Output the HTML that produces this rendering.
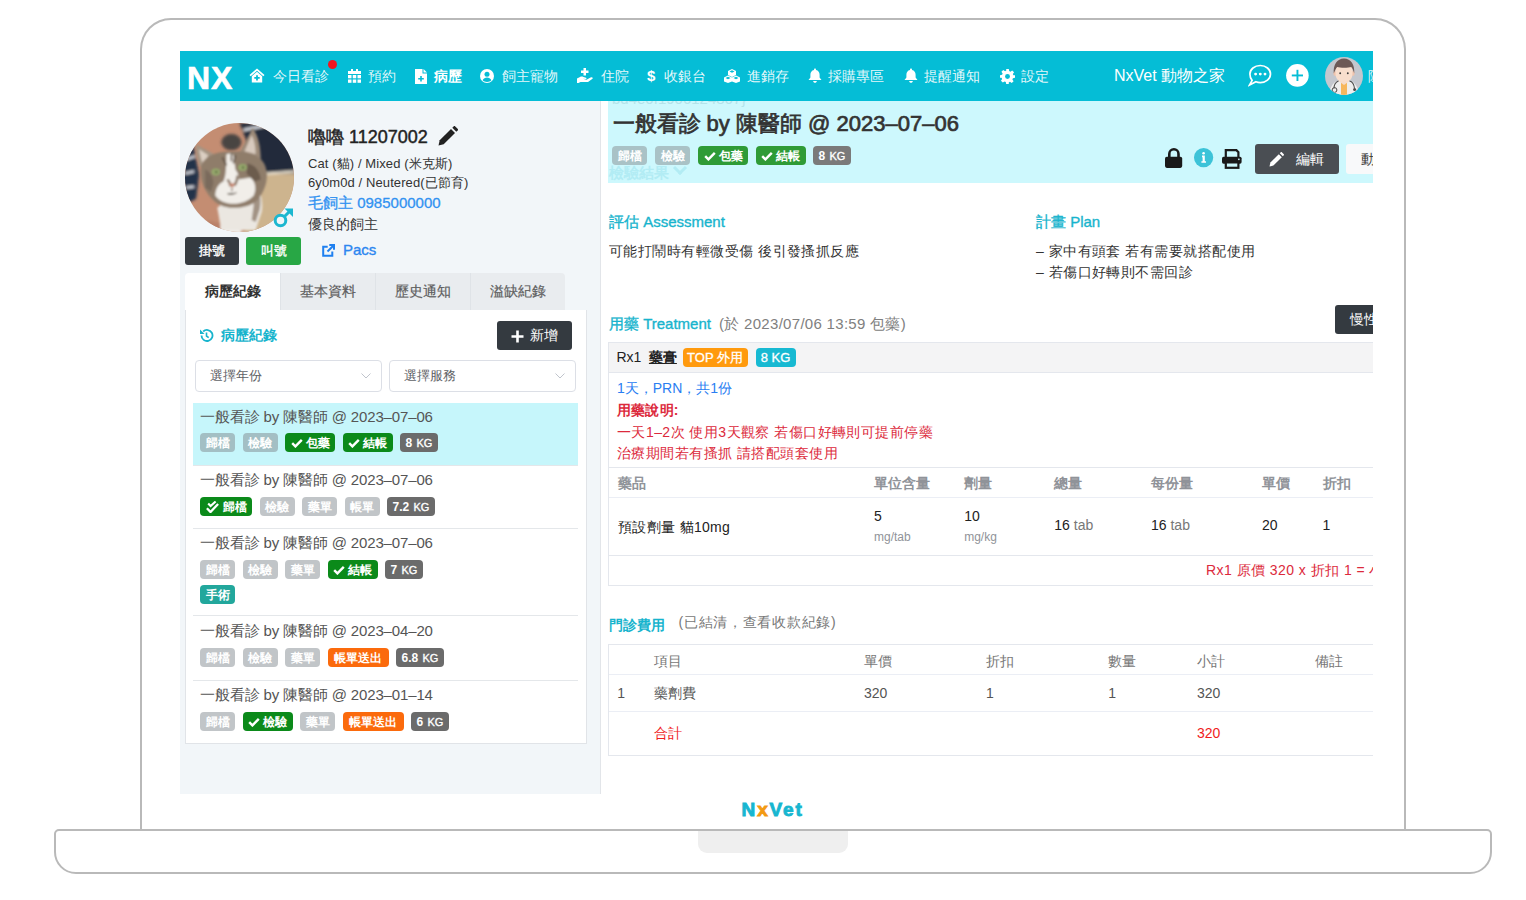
<!DOCTYPE html>
<html><head><meta charset="utf-8">
<style>
*{box-sizing:border-box;margin:0;padding:0}
html,body{width:1526px;height:900px;overflow:hidden;background:#fff;font-family:"Liberation Sans",sans-serif;color:#212529}
.abs{position:absolute}
#lid{position:absolute;left:140px;top:18px;width:1266px;height:812px;border:2px solid #b9b9b9;border-bottom:none;border-radius:31px 31px 0 0}
#base{position:absolute;left:54px;top:829px;width:1438px;height:45px;border:2px solid #b9b9b9;border-radius:5px 5px 22px 22px;background:#fff}
#notch{position:absolute;left:698px;top:831px;width:150px;height:22px;background:#efefef;border-radius:0 0 9px 9px}
#screen{position:absolute;left:180px;top:51px;width:1193px;height:743px;overflow:hidden;background:#fff}
#nav{position:absolute;left:0;top:0;width:1193px;height:50px;background:#05bdd6;color:rgba(255,255,255,.9);font-size:14px}
#nav .t{position:absolute;top:0;line-height:50px;white-space:nowrap}
#nav svg{position:absolute}
#side{position:absolute;left:0;top:50px;width:421px;height:693px;background:#f2f6f9;border-right:1px solid #e2e5e9}
#main{position:absolute;left:421px;top:50px;width:772px;height:693px;background:#fff}
.badge{display:inline-block;text-align:center;height:19px;line-height:20px;padding:0 5.5px;border-radius:4px;font-size:12px;font-weight:bold;color:#fff;white-space:nowrap;vertical-align:top}
.bg{background:rgba(108,117,125,.42)}
.bgr{background:#0b8a1a}
.bkg{background:#6b6b6b}
.bor{background:#fb6a0c}
.bte{background:#22a79c}
.kg{font-size:11px;font-weight:normal;-webkit-text-stroke:0.35px #fff;margin-left:1px}
.chk{display:inline-block;width:12px;height:10px;margin-right:3px;vertical-align:-1px}
.item{position:absolute;left:8px;width:385px;border-top:1px solid #e4e7ea}
.item .ttl{position:absolute;left:7px;font-size:15px;color:#555;white-space:nowrap;line-height:20px;letter-spacing:-0.14px}
.item .row{position:absolute;left:7px;white-space:nowrap}
.item .row .badge{margin-right:7.5px}
.cy{color:#17b4cd}
.hd{position:absolute;font-size:15px;color:#17b4cd;white-space:nowrap;line-height:20px;-webkit-text-stroke:0.35px #17b4cd}
.tx{position:absolute;font-size:14px;color:#333;white-space:nowrap;line-height:20px;letter-spacing:0.47px}
.th{position:absolute;font-size:14px;color:#909399;font-weight:bold;white-space:nowrap;line-height:20px}
.td{position:absolute;font-size:14px;color:#222;white-space:nowrap;line-height:20px}
</style></head><body>
<div id="lid"></div>
<div id="screen">
  <div id="nav">
    <div class="t" style="left:7px;top:1.5px;font-size:32px;font-weight:bold;color:#fff;-webkit-text-stroke:0.6px #fff;letter-spacing:1px">NX</div>
    <!-- home -->
    <svg style="left:69px;top:17px" width="16" height="15" viewBox="0 0 16 15"><path d="M8 0.5L0.5 7l1.2 1.3L8 2.8l6.3 5.5 1.2-1.3z" fill="#fff"/><path d="M2.8 8.2L8 3.7l5.2 4.5V14.5H2.8z" fill="#fff"/><path d="M7.1 7.2h1.8v1.8h1.8v1.8H8.9v1.8H7.1v-1.8H5.3V9h1.8z" fill="#05bdd6"/></svg>
    <div class="t" style="left:93px">今日看診</div>
    <div class="abs" style="left:148px;top:9px;width:9px;height:9px;border-radius:50%;background:#f2141e"></div>
    <!-- calendar -->
    <svg style="left:168px;top:18px" width="13" height="14" viewBox="0 0 13 14"><rect x="0" y="2" width="13" height="3" fill="#fff"/><rect x="3" y="0" width="2" height="3" fill="#fff"/><rect x="8" y="0" width="2" height="3" fill="#fff"/><rect x="0" y="6" width="3.5" height="3.3" fill="#fff"/><rect x="4.75" y="6" width="3.5" height="3.3" fill="#fff"/><rect x="9.5" y="6" width="3.5" height="3.3" fill="#fff"/><rect x="0" y="10.5" width="3.5" height="3.3" fill="#fff"/><rect x="4.75" y="10.5" width="3.5" height="3.3" fill="#fff"/><rect x="9.5" y="10.5" width="3.5" height="3.3" fill="#fff"/></svg>
    <div class="t" style="left:188px">預約</div>
    <!-- file -->
    <svg style="left:235px;top:18px" width="12" height="15" viewBox="0 0 12 15"><path d="M0 0h7.5v4.5H12V15H0z" fill="#fff"/><path d="M8.5 0L12 3.5H8.5z" fill="#fff"/><path d="M5.2 7h1.6v2h2v1.6h-2v2H5.2v-2h-2V9h2z" fill="#05bdd6"/></svg>
    <div class="t" style="left:254px;font-weight:bold;color:#fff">病歷</div>
    <!-- user circle -->
    <svg style="left:300px;top:18px" width="14" height="14" viewBox="0 0 14 14"><circle cx="7" cy="7" r="7" fill="#fff"/><circle cx="7" cy="5.3" r="2.5" fill="#05bdd6"/><path d="M2.6 11.3C3.6 9.4 5.2 8.6 7 8.6s3.4.8 4.4 2.7C10.3 12.4 8.8 13 7 13s-3.3-.6-4.4-1.7z" fill="#05bdd6"/></svg>
    <div class="t" style="left:322px">飼主寵物</div>
    <!-- hand medical -->
    <svg style="left:397px;top:17px" width="17" height="15" viewBox="0 0 17 15"><path d="M6.5 0h2.5v2.5h2.5V5H9v2.5H6.5V5H4V2.5h2.5z" fill="#fff"/><path d="M0 10.5l3-1.5c1.2-.6 2.3-.6 3.5 0l2.5.8c.8.3.6 1.4-.3 1.3L6 10.8l3.5 1 4.5-2.5c1.2-.6 2.4.6 1.5 1.5L11 14H3.5L1.5 15H0z" fill="#fff"/></svg>
    <div class="t" style="left:421px">住院</div>
    <div class="t" style="left:467px;font-weight:bold;color:#fff;font-size:15px">$</div>
    <div class="t" style="left:484px">收銀台</div>
    <!-- cubes -->
    <svg style="left:544px;top:18px" width="16" height="14" viewBox="0 0 16 14"><path d="M8 0l4 2v4l-4 2-4-2V2z" fill="#fff"/><path d="M4 6.5l4 2v4l-4 1.5-4-1.5v-4z" fill="#fff"/><path d="M12 6.5l4 2v4l-4 1.5-4-1.5v-4z" fill="#fff"/><path d="M8 1.3l2.5 1.2L8 3.7 5.5 2.5zM4 7.8l2.5 1.2L4 10.2 1.5 9zM12 7.8l2.5 1.2-2.5 1.2L9.5 9z" fill="#05bdd6"/></svg>
    <div class="t" style="left:567px">進銷存</div>
    <!-- bell -->
    <svg style="left:628px;top:17px" width="14" height="15" viewBox="0 0 14 15"><path d="M7 0.5c.7 0 1 .5 1 1v.6c2.3.5 3.6 2.4 3.6 4.7v2.6L13.5 12H.5l1.9-2.6V6.8c0-2.3 1.3-4.2 3.6-4.7v-.6c0-.5.3-1 1-1z" fill="#fff"/><path d="M5.2 13h3.6c0 1-.8 1.8-1.8 1.8S5.2 14 5.2 13z" fill="#fff"/></svg>
    <div class="t" style="left:648px">採購專區</div>
    <svg style="left:724px;top:17px" width="14" height="15" viewBox="0 0 14 15"><path d="M7 0.5c.7 0 1 .5 1 1v.6c2.3.5 3.6 2.4 3.6 4.7v2.6L13.5 12H.5l1.9-2.6V6.8c0-2.3 1.3-4.2 3.6-4.7v-.6c0-.5.3-1 1-1z" fill="#fff"/><path d="M5.2 13h3.6c0 1-.8 1.8-1.8 1.8S5.2 14 5.2 13z" fill="#fff"/></svg>
    <div class="t" style="left:744px">提醒通知</div>
    <!-- cog -->
    <svg style="left:820px;top:18px" width="15" height="15" viewBox="0 0 16 16"><path d="M6.6 0h2.8l.4 2.2 1.3.6 1.9-1.3 2 2-1.3 1.9.6 1.3L16 6.6v2.8l-2.2.4-.6 1.3 1.3 1.9-2 2-1.9-1.3-1.3.6L9.4 16H6.6l-.4-2.2-1.3-.6L3 14.5l-2-2 1.3-1.9-.6-1.3L0 9.4V6.6l2.2-.4.6-1.3L1.5 3l2-2 1.9 1.3 1.3-.6z" fill="#fff"/><circle cx="8" cy="8" r="2.6" fill="#05bdd6"/></svg>
    <div class="t" style="left:841px">設定</div>
    <div class="t" style="left:934px;font-size:16px;color:#fff">NxVet 動物之家</div>
    <!-- chat -->
    <svg style="left:1067.5px;top:13px" width="24" height="23" viewBox="0 0 24 23"><path d="M12.3 1.5c5.6 0 10.2 3.8 10.2 8.6s-4.6 8.6-10.2 8.6c-1.6 0-3.1-.3-4.4-.9L1.5 21l2.6-4.6C2.7 14.8 1.9 12.6 1.9 10.1 1.9 5.3 6.6 1.5 12.3 1.5z" fill="none" stroke="#fff" stroke-width="1.7"/><circle cx="7.6" cy="10.1" r="1.45" fill="#fff"/><circle cx="12.3" cy="10.1" r="1.45" fill="#fff"/><circle cx="17" cy="10.1" r="1.45" fill="#fff"/></svg>
    <!-- plus circle -->
    <svg style="left:1106.2px;top:12.6px" width="23" height="23" viewBox="0 0 23 23"><circle cx="11.4" cy="11.4" r="11.3" fill="#fff"/><rect x="10.5" y="5.8" width="1.9" height="11.2" fill="#05bdd6"/><rect x="5.8" y="10.5" width="11.2" height="1.9" fill="#05bdd6"/></svg>
    <!-- avatar -->
    <svg style="left:1145px;top:6.3px" width="38" height="38" viewBox="0 0 38 38"><defs><clipPath id="av"><circle cx="19" cy="19" r="19"/></clipPath></defs><circle cx="19" cy="19" r="19" fill="#c4c7ce"/><g clip-path="url(#av)"><path d="M4 38c.5-6 3-11 7-13.5l8-1.5 8 1.5c4 2.5 6.5 7.5 7 13.5z" fill="#eeeeee"/><path d="M16 25h6v13h-6z" fill="#f6b75e"/><path d="M13.5 24l5.5 4 5.5-4-1.5-3h-8z" fill="#f6dccb"/><ellipse cx="10" cy="16.5" rx="1.6" ry="2.4" fill="#eec3ad"/><ellipse cx="28" cy="16.5" rx="1.6" ry="2.4" fill="#eec3ad"/><path d="M10.5 13c0-5 3.5-8 8.5-8s8.5 3 8.5 8v4c0 5-3.5 8-8.5 8s-8.5-3-8.5-8z" fill="#f8decd"/><path d="M8.8 16.5C8 8 12 1.5 19 1.5S30 8 29.2 16.5c-.8-3-1.5-5-3-6.5-3 1-11 1-14 0-1.5 1.5-2.2 3.5-3.4 6.5z" fill="#6d5956"/><circle cx="15.2" cy="16.3" r=".95" fill="#3b3b3b"/><circle cx="22.8" cy="16.3" r=".95" fill="#3b3b3b"/><path d="M13.5 24c-2.5 1-4.5 4-4.5 7.5M24.5 24c2.5 .5 4.5 3 5 7.5" stroke="#4a4a4a" stroke-width="1.1" fill="none"/><circle cx="29.6" cy="32.5" r="1.5" fill="#4a4a4a"/><circle cx="9.5" cy="33" r="2.4" fill="none" stroke="#4a4a4a" stroke-width="1"/></g></svg>
    <div class="t" style="left:1188px">陳</div>
  </div>

  <div id="side">
    <!-- cat photo -->
    <svg class="abs" style="left:4.5px;top:22.3px" width="109" height="109" viewBox="0 0 108 108"><defs><clipPath id="cat"><circle cx="54" cy="54" r="54"/></clipPath><filter id="bl" x="-10%" y="-10%" width="120%" height="120%"><feGaussianBlur stdDeviation="1.4"/></filter><filter id="bl2" x="-10%" y="-10%" width="120%" height="120%"><feGaussianBlur stdDeviation="0.9"/></filter></defs>
    <g clip-path="url(#cat)">
      <rect width="108" height="108" fill="#c48d72"/>
      <g filter="url(#bl)">
      <path d="M-4 26l12-5 6 30-3 24-15 8z" fill="#22304a"/>
      <path d="M1 36l9-3M0 50l9-2M1 64l8-1" stroke="#e6e8ee" stroke-width="2.2"/>
      <path d="M54 0h56v52H70L62 20z" fill="#212a3a"/>
      <path d="M58 7l20-4" stroke="#e6e8ee" stroke-width="2.5"/>
      <path d="M70 50h40v60H58l8-30z" fill="#cdb48e"/>
      <path d="M70 51l40-3" stroke="#ece4d4" stroke-width="2.2"/>
      <ellipse cx="46" cy="19" rx="10" ry="8" fill="#484442"/>
      <path d="M10 100c8-4 20-4 28 2v8H10z" fill="#b98068"/>
      <path d="M36 101h20v9H36z" fill="#f0eee9"/>
      </g>
      <g filter="url(#bl2)">
      <path d="M66 58c8 6 12 18 10 30l-6 18H36l-4-22z" fill="#ebe7e1"/>
      <path d="M68 56c6 8 8 20 6 30l-4 12-4-2 2-14c0-10-2-18-6-24z" fill="#a29384"/>
      <path d="M11 21l18 10-8 18-6-6c-3-6-4-14-4-22z" fill="#a59483"/>
      <path d="M14 26l9 6-5 9c-2-4-3-9-4-15z" fill="#dccfc3"/>
      <path d="M67 5l-14 26 22 6c0-12-2-24-8-32z" fill="#9c8a78"/>
      <path d="M66 12l-7 16 11 3c0-7-1-13-4-19z" fill="#d8cabe"/>
      <path d="M16 42c4-10 16-14 32-14 16 0 28 4 32 16 3 10 0 22-8 32-6 6-14 8-24 8-10 0-18-4-24-12-6-8-10-18-8-30z" fill="#8f7d6b"/>
      <path d="M41 31c3-1 6-1 7 1l2 14c2 3 4 6 3 10l12-2c5 4 6 12 3 18-5 5-12 8-20 8-8 0-14-3-18-8 0-6 3-12 8-14 2-4 3-10 3-27z" fill="#f1eee9"/>
      <path d="M20 46c5 2 8 8 8 14l-2 8-6-4z" fill="#7a6a5b"/>
      <path d="M62 40c8 2 12 8 13 16l-6 2-8-8z" fill="#6c5c4e"/>
      <path d="M37 34l4 8M50 32l-2 8M46 30v8" stroke="#5e4f43" stroke-width="1.6"/>
      <path d="M42 56c2 2 3 4 3 7M52 52c0 3-1 7-3 10" stroke="#8a7766" stroke-width="2.4" fill="none"/>
      <ellipse cx="30.5" cy="48.5" rx="4.3" ry="3.4" fill="#94a86b"/>
      <ellipse cx="57" cy="44" rx="4.3" ry="3.4" fill="#94a86b"/>
      <circle cx="31" cy="48.5" r="1" fill="#3a3a2a"/>
      <circle cx="57.5" cy="44" r="1" fill="#3a3a2a"/>
      <path d="M43 60h7l-3 4.5z" fill="#c48068"/>
      <path d="M46.5 64.5v3M42 70c3 1 6 1 9-1" stroke="#6f5f50" stroke-width="1"/>
      </g>
    </g></svg>
    <!-- male symbol -->
    <svg class="abs" style="left:93px;top:106px" width="21" height="21" viewBox="0 0 21 21"><circle cx="7.5" cy="13.5" r="5.3" fill="none" stroke="#1cb7d0" stroke-width="3"/><path d="M11 10L18 3" stroke="#1cb7d0" stroke-width="3"/><path d="M11.5 1.5H20V10z" fill="#1cb7d0"/></svg>
    <div class="abs" style="left:5px;top:136px;width:54px;height:28px;background:#343a40;border-radius:3px;color:#fff;font-size:13px;line-height:28px;text-align:center;-webkit-text-stroke:0.35px #fff">掛號</div>
    <div class="abs" style="left:66px;top:136px;width:55px;height:28px;background:#28a745;border-radius:3px;color:#fff;font-size:13px;line-height:28px;text-align:center;-webkit-text-stroke:0.35px #fff">叫號</div>

    <div class="abs" style="left:128px;top:25px;font-size:18px;color:#222;line-height:22px;white-space:nowrap;-webkit-text-stroke:0.45px #222">嚕嚕 11207002</div>
    <svg class="abs" style="left:258px;top:25px" width="20" height="20" viewBox="0 0 20 20"><path d="M0.5 19.5l1.2-5.2L13 3l4 4L5.7 18.3z" fill="#222"/><path d="M14.3 1.7l1.5-1.5c.4-.3.9-.3 1.3 0l2.7 2.7c.3.4.3.9 0 1.3l-1.5 1.5z" fill="#222"/></svg>
    <div class="abs" style="left:128px;top:55px;font-size:13px;color:#333;line-height:16px;letter-spacing:0.1px;white-space:nowrap">Cat (貓) / Mixed (米克斯)</div>
    <div class="abs" style="left:128px;top:73.5px;font-size:13px;color:#333;line-height:16px;letter-spacing:0.1px;white-space:nowrap">6y0m0d / Neutered(已節育)</div>
    <div class="abs" style="left:128px;top:91.5px;font-size:15px;color:#3192f1;line-height:20px;white-space:nowrap;-webkit-text-stroke:0.3px #3192f1">毛飼主 0985000000</div>
    <div class="abs" style="left:128px;top:113px;font-size:14px;color:#333;line-height:20px;white-space:nowrap">優良的飼主</div>
    <svg class="abs" style="left:142px;top:142.5px" width="13" height="13" viewBox="0 0 13 13"><path d="M10.3 7.5v4.3H1.2V2.7h4.5" fill="none" stroke="#1f80f0" stroke-width="2"/><path d="M7.3 1H12V5.7" fill="none" stroke="#1f80f0" stroke-width="2"/><path d="M11.8 1.2L5.5 7.5" stroke="#1f80f0" stroke-width="2"/></svg>
    <div class="abs" style="left:163px;top:139px;font-size:15px;color:#2c86f0;line-height:20px;white-space:nowrap;-webkit-text-stroke:0.35px #2c86f0">Pacs</div>

    <!-- tabs -->
    <div class="abs" style="left:5px;top:172px;width:381px;height:37px;">
      <div class="abs" style="left:0;top:0;width:95px;height:37px;background:#fff;border-radius:4px 0 0 0;font-size:14px;font-weight:bold;color:#333;text-align:center;line-height:37px">病歷紀錄</div>
      <div class="abs" style="left:95px;top:0;width:95px;height:37px;background:#e9ecef;border-left:1px solid #dfe3e7;font-size:14px;color:#5f5f5f;text-align:center;line-height:37px;-webkit-text-stroke:0.2px #5f5f5f">基本資料</div>
      <div class="abs" style="left:190px;top:0;width:95px;height:37px;background:#e9ecef;border-left:1px solid #dfe3e7;font-size:14px;color:#5f5f5f;text-align:center;line-height:37px;-webkit-text-stroke:0.2px #5f5f5f">歷史通知</div>
      <div class="abs" style="left:285px;top:0;width:95px;height:37px;background:#e9ecef;border-left:1px solid #dfe3e7;border-radius:0 4px 0 0;font-size:14px;color:#5f5f5f;text-align:center;line-height:37px;-webkit-text-stroke:0.2px #5f5f5f">溢缺紀錄</div>
    </div>
    <div class="abs" style="left:5px;top:208.5px;width:402px;height:434px;background:#fff;border:1px solid #e1e4e8;border-top:none">
    </div>
    <svg class="abs" style="left:19px;top:227px" width="15" height="15" viewBox="0 0 15 15"><path d="M2.5 7.5A5.5 5.5 0 1 0 4.2 3.5" fill="none" stroke="#17b4cd" stroke-width="1.8"/><path d="M1 1.5v4.5h4.5z" fill="#17b4cd"/><path d="M7.5 4.5v3.5l2.2 1.6" fill="none" stroke="#17b4cd" stroke-width="1.6"/></svg>
    <div class="abs cy" style="left:41px;top:224px;font-size:14px;font-weight:bold;line-height:20px">病歷紀錄</div>
    <div class="abs" style="left:317px;top:220px;width:75px;height:29px;background:#343a40;border-radius:3px;color:#fff;font-size:14px;line-height:29px;text-align:center"><svg style="position:absolute;left:14px;top:8.5px" width="13" height="13" viewBox="0 0 13 13"><path d="M6.5 0.5v12M0.5 6.5h12" stroke="#fff" stroke-width="2.6"/></svg><span style="position:absolute;left:33px;top:0">新增</span></div>

    <div class="abs" style="left:15px;top:258.5px;width:187px;height:32px;border:1px solid #dcdfe6;border-radius:4px;background:#fff;font-size:13px;color:#606266;line-height:30px;padding-left:14px">選擇年份<svg class="abs" style="right:10px;top:12px" width="10" height="6" viewBox="0 0 10 6"><path d="M0.5 0.5L5 5 9.5 0.5" fill="none" stroke="#c0c4cc" stroke-width="1"/></svg></div>
    <div class="abs" style="left:209px;top:258.5px;width:187px;height:32px;border:1px solid #dcdfe6;border-radius:4px;background:#fff;font-size:13px;color:#606266;line-height:30px;padding-left:14px">選擇服務<svg class="abs" style="right:10px;top:12px" width="10" height="6" viewBox="0 0 10 6"><path d="M0.5 0.5L5 5 9.5 0.5" fill="none" stroke="#c0c4cc" stroke-width="1"/></svg></div>

    <!-- list items -->
    <div class="item" style="left:13px;top:302px;height:62px;background:#c6f6fb;border-top:none">
      <div class="ttl" style="top:4px">一般看診 by 陳醫師 @ 2023–07–06</div>
      <div class="row" style="top:30.0px"><span class="badge" style="background:#a3bfc4;width:35px">歸檔</span><span class="badge" style="background:#a3bfc4;width:35px">檢驗</span><span class="badge bgr" style="width:50px"><svg class="chk" viewBox="0 0 12 10"><path d="M1.2 5.2l3.2 3.2L10.8 1.8" fill="none" stroke="#fff" stroke-width="2.4"/></svg>包藥</span><span class="badge bgr" style="width:50px"><svg class="chk" viewBox="0 0 12 10"><path d="M1.2 5.2l3.2 3.2L10.8 1.8" fill="none" stroke="#fff" stroke-width="2.4"/></svg>結帳</span><span class="badge bkg" style="width:37.921875px">8 <span class="kg">KG</span></span></div>
    </div>
    <div class="item" style="left:13px;top:364px;height:64px">
      <div class="ttl" style="top:4px">一般看診 by 陳醫師 @ 2023–07–06</div>
      <div class="row" style="top:30.5px"><span class="badge bgr" style="width:52px"><svg class="chk" style="width:13px;height:12px;vertical-align:-2px;margin-right:4px" viewBox="0 0 13 12"><path d="M0.9 7.2l3.6 3.8 7.6-8" fill="none" stroke="#fff" stroke-width="2.3"/><path d="M2.2 2.6l2.4 2.5 5-4.6" fill="none" stroke="#fff" stroke-width="2.1"/></svg>歸檔</span><span class="badge bg" style="width:35px">檢驗</span><span class="badge bg" style="width:35px">藥單</span><span class="badge bg" style="width:35px">帳單</span><span class="badge bkg" style="width:47.921875px">7.2 <span class="kg">KG</span></span></div>
    </div>
    <div class="item" style="left:13px;top:427px;height:88px">
      <div class="ttl" style="top:4px">一般看診 by 陳醫師 @ 2023–07–06</div>
      <div class="row" style="top:30.5px"><span class="badge bg" style="width:35px">歸檔</span><span class="badge bg" style="width:35px">檢驗</span><span class="badge bg" style="width:35px">藥單</span><span class="badge bgr" style="width:50px"><svg class="chk" viewBox="0 0 12 10"><path d="M1.2 5.2l3.2 3.2L10.8 1.8" fill="none" stroke="#fff" stroke-width="2.4"/></svg>結帳</span><span class="badge bkg" style="width:37.921875px">7 <span class="kg">KG</span></span></div>
      <div class="row" style="top:56.0px"><span class="badge bte" style="width:35px">手術</span></div>
    </div>
    <div class="item" style="left:13px;top:514px;height:64px">
      <div class="ttl" style="top:5px">一般看診 by 陳醫師 @ 2023–04–20</div>
      <div class="row" style="top:32px"><span class="badge bg" style="width:35px">歸檔</span><span class="badge bg" style="width:35px">檢驗</span><span class="badge bg" style="width:35px">藥單</span><span class="badge bor" style="padding:0 6.5px;width:61px">帳單送出</span><span class="badge bkg" style="width:47.921875px">6.8 <span class="kg">KG</span></span></div>
    </div>
    <div class="item" style="left:13px;top:579px;height:64px">
      <div class="ttl" style="top:4px">一般看診 by 陳醫師 @ 2023–01–14</div>
      <div class="row" style="top:31.0px"><span class="badge bg" style="width:35px">歸檔</span><span class="badge bgr" style="width:50px"><svg class="chk" viewBox="0 0 12 10"><path d="M1.2 5.2l3.2 3.2L10.8 1.8" fill="none" stroke="#fff" stroke-width="2.4"/></svg>檢驗</span><span class="badge bg" style="width:35px">藥單</span><span class="badge bor" style="padding:0 6.5px;width:61px">帳單送出</span><span class="badge bkg" style="width:37.921875px">6 <span class="kg">KG</span></span></div>
    </div>
  </div>

  <div id="main">
    <div class="abs" style="left:7px;top:0;width:766px;height:81.5px;background:#cdf8fd;overflow:hidden">
      <div class="abs" style="left:4px;top:-10px;font-size:15px;color:#b3e3ea;line-height:16px;white-space:nowrap">bd4e0f1906124867}</div>
      <div class="abs" style="left:4.5px;top:10px;font-size:22px;color:#333;line-height:26px;-webkit-text-stroke:0.7px #333;white-space:nowrap">一般看診 by 陳醫師 @ 2023–07–06</div>
      <div class="abs" style="left:4px;top:44.5px;white-space:nowrap;font-size:0"><span class="badge" style="background:#a9c2c6;margin-right:8px;width:35px">歸檔</span><span class="badge" style="background:#a9c2c6;margin-right:8px;width:35px">檢驗</span><span class="badge" style="background:#2f9b36;margin-right:7.5px;width:50px"><svg class="chk" viewBox="0 0 12 10"><path d="M1.2 5.2l3.2 3.2L10.8 1.8" fill="none" stroke="#fff" stroke-width="2.4"/></svg>包藥</span><span class="badge" style="background:#2f9b36;margin-right:7.5px;width:50px"><svg class="chk" viewBox="0 0 12 10"><path d="M1.2 5.2l3.2 3.2L10.8 1.8" fill="none" stroke="#fff" stroke-width="2.4"/></svg>結帳</span><span class="badge" style="background:#7a7a7a;width:37.921875px">8 <span class="kg">KG</span></span></div>
      <div class="abs" style="left:1px;top:61.5px;font-size:15px;font-weight:bold;color:#b2ecf4;line-height:18px;white-space:nowrap">檢驗結果<span style="display:inline-block;width:10px;height:10px;border-left:3px solid #b2ecf4;border-bottom:3px solid #b2ecf4;transform:rotate(-45deg);margin-left:6px;vertical-align:5px"></span></div>
    </div>
    <!-- lock -->
    <svg class="abs" style="left:563.9px;top:47.3px" width="18" height="21" viewBox="0 0 18 21"><path d="M4.3 9.5V5.9a4.6 4.6 0 0 1 9.2 0V9.5" fill="none" stroke="#1a1a1a" stroke-width="2.6"/><rect x="0" y="8.8" width="17.2" height="11.1" rx="1.8" fill="#1a1a1a"/></svg>
    <!-- info -->
    <svg class="abs" style="left:592.6px;top:47.2px" width="20" height="20" viewBox="0 0 20 20"><circle cx="9.6" cy="9.6" r="9.6" fill="#3cc3d8"/><circle cx="9.6" cy="5.2" r="1.3" fill="#fff"/><path d="M8 7.6h2.8v5.6h1.2v1.6H7.4v-1.6h1.2V9.2H8z" fill="#fff"/></svg>
    <!-- printer -->
    <svg class="abs" style="left:621.2px;top:47.5px" width="20" height="21" viewBox="0 0 20 21"><path d="M3.8 8V1.1h10.6l2 2V8" fill="none" stroke="#1a1a1a" stroke-width="2.2"/><rect x="0" y="7.7" width="19.6" height="7" rx="1.6" fill="#1a1a1a"/><rect x="16.1" y="9.6" width="1.5" height="1.5" fill="#cdf8fd"/><rect x="3.8" y="13.4" width="12.6" height="5.4" fill="#cdf8fd" stroke="#1a1a1a" stroke-width="2.2"/></svg>
    <div class="abs" style="left:654px;top:43px;width:84px;height:30px;background:#4a4e53;border-radius:3px;color:#fff;font-size:14px;line-height:30px;white-space:nowrap">
      <svg class="abs" style="left:14px;top:7.5px" width="15" height="15" viewBox="0 0 15 15"><path d="M0.5 14.5l0.9-3.9L9.8 2.2l3 3L4.4 13.6z" fill="#fff"/><path d="M10.8 1.2l1-1c.3-.3.7-.3 1 0l2 2c.3.3.3.7 0 1l-1 1z" fill="#fff"/></svg>
      <span class="abs" style="left:41px;top:0">編輯</span>
    </div>
    <div class="abs" style="left:745px;top:43px;width:40px;height:30px;background:#f8f9fa;border-radius:3px;color:#333;font-size:14px;line-height:30px;padding-left:15px;white-space:nowrap">動物</div>

    <div class="hd" style="left:8px;top:111px">評估 Assessment</div>
    <div class="tx" style="left:8px;top:139.5px">可能打鬧時有輕微受傷 後引發搔抓反應</div>
    <div class="hd" style="left:435px;top:111px">計畫 Plan</div>
    <div class="tx" style="left:435px;top:139.7px">– 家中有頭套 若有需要就搭配使用</div>
    <div class="tx" style="left:435px;top:161px">– 若傷口好轉則不需回診</div>

    <div class="hd" style="left:8px;top:212.6px">用藥 Treatment</div><div class="abs" style="left:118px;top:212.6px;color:#808080;font-size:15px;line-height:20px;white-space:nowrap;letter-spacing:0.3px">(於 2023/07/06 13:59 包藥)</div>
    <div class="abs" style="left:734.4px;top:204.4px;width:50px;height:29px;background:#343a40;border-radius:3px;color:#fff;font-size:14px;line-height:29px;padding-left:15px;white-space:nowrap">慢性</div>

    <div class="abs" style="left:7px;top:241px;width:780px;height:244px;border:1px solid #e4e7ed">
      <div class="abs" style="left:0;top:0;width:780px;height:30px;background:#f4f4f5;border-bottom:1px solid #e4e7ed"></div>
      <div class="abs" style="left:7.5px;top:4.3px;font-size:14px;color:#222;line-height:20px;white-space:nowrap">Rx1<b style="text-decoration:underline;margin-left:7.5px">藥膏</b></div>
      <div class="abs" style="left:73.5px;top:5.4px;width:65px;height:18.5px;line-height:19.5px;text-align:center;border-radius:4px;background:#ff9a0e;color:#fff;font-size:13px;white-space:nowrap;-webkit-text-stroke:0.3px #fff">TOP 外用</div>
      <div class="abs" style="left:146.5px;top:5.4px;width:40px;height:18.5px;line-height:19.5px;text-align:center;border-radius:4px;background:#17b9d2;color:#fff;font-size:13px;white-space:nowrap;-webkit-text-stroke:0.3px #fff">8 KG</div>
      <div class="abs" style="left:8px;top:34.8px;font-size:14px;color:#2a7ef2;line-height:20px;white-space:nowrap">1天，PRN，共1份</div>
      <div class="abs" style="left:8px;top:56.5px;font-size:14px;color:#dc2a3c;font-weight:bold;line-height:20px;white-space:nowrap;letter-spacing:0.2px">用藥說明:</div>
      <div class="abs" style="left:8px;top:78.5px;font-size:14px;color:#dc2a3c;line-height:20px;white-space:nowrap;letter-spacing:0.45px">一天1–2次 使用3天觀察 若傷口好轉則可提前停藥</div>
      <div class="abs" style="left:8px;top:99.7px;font-size:14px;color:#dc2a3c;line-height:20px;white-space:nowrap;letter-spacing:0.45px">治療期間若有搔抓 請搭配頭套使用</div>
      <div class="abs" style="left:0;top:124px;width:780px;height:1px;background:#e4e7ed"></div>
      <div class="abs" style="left:0;top:154px;width:780px;height:1px;background:#ebeef5"></div>
      <div class="abs" style="left:0;top:211.5px;width:780px;height:1px;background:#e4e7ed"></div>
      <div class="th" style="left:9.2px;top:130px">藥品</div>
      <div class="th" style="left:265.0px;top:130px">單位含量</div>
      <div class="th" style="left:355.2px;top:130px">劑量</div>
      <div class="th" style="left:445.3px;top:130px">總量</div>
      <div class="th" style="left:542.0px;top:130px">每份量</div>
      <div class="th" style="left:653.0px;top:130px">單價</div>
      <div class="th" style="left:713.6px;top:130px">折扣</div>
      <div class="td" style="left:9.2px;top:173.5px;letter-spacing:0.3px">預設劑量 貓10mg</div>
      <div class="td" style="left:265.0px;top:162.5px">5</div>
      <div class="abs" style="left:265.0px;top:186.5px;font-size:12px;color:#909399;line-height:14px">mg/tab</div>
      <div class="td" style="left:355.2px;top:162.5px">10</div>
      <div class="abs" style="left:355.2px;top:186.5px;font-size:12px;color:#909399;line-height:14px">mg/kg</div>
      <div class="td" style="left:445.3px;top:172px">16 <span style="color:#777">tab</span></div>
      <div class="td" style="left:542.0px;top:172px">16 <span style="color:#777">tab</span></div>
      <div class="td" style="left:653.0px;top:172px">20</div>
      <div class="td" style="left:713.6px;top:172px">1</div>
      <div class="abs" style="left:597.0px;top:216.5px;font-size:14px;color:#dc2a3c;line-height:20px;white-space:nowrap;letter-spacing:0.45px">Rx1 原價 320 x 折扣 1 = 小計 320</div>
    </div>

    <div class="abs" style="left:8px;top:514.4px;font-size:14px;font-weight:bold;color:#17b4cd;line-height:20px">門診費用</div>
    <div class="abs" style="left:77.6px;top:511px;font-size:14px;color:#777;line-height:20px;white-space:nowrap;letter-spacing:0.7px">(已結清，查看收款紀錄)</div>
    <div class="abs" style="left:7px;top:543px;width:780px;height:112px;border:1px solid #e4e7ed">
      <div class="abs" style="left:0;top:29px;width:780px;height:1px;background:#ebeef5"></div>
      <div class="abs" style="left:0;top:66px;width:780px;height:1px;background:#ebeef5"></div>
      <div class="th" style="left:45.3px;top:5.6px;font-weight:normal;color:#777">項目</div>
      <div class="th" style="left:255.0px;top:5.6px;font-weight:normal;color:#777">單價</div>
      <div class="th" style="left:376.9px;top:5.6px;font-weight:normal;color:#777">折扣</div>
      <div class="th" style="left:499.3px;top:5.6px;font-weight:normal;color:#777">數量</div>
      <div class="th" style="left:588.0px;top:5.6px;font-weight:normal;color:#777">小計</div>
      <div class="th" style="left:706.0px;top:5.6px;font-weight:normal;color:#777">備註</div>
      <div class="td" style="left:8.3px;top:38px;color:#555">1</div>
      <div class="td" style="left:45.3px;top:38px;color:#555">藥劑費</div>
      <div class="td" style="left:255.0px;top:38px;color:#555">320</div>
      <div class="td" style="left:376.9px;top:38px;color:#555">1</div>
      <div class="td" style="left:499.3px;top:38px;color:#555">1</div>
      <div class="td" style="left:588.0px;top:38px;color:#555">320</div>
      <div class="td" style="left:45.3px;top:78px;color:#f01c1c">合計</div>
      <div class="td" style="left:588.0px;top:78px;color:#f01c1c">320</div>
    </div>
  </div>
</div>
<div id="base"></div>
<div id="notch"></div>
<div class="abs" style="left:741.5px;top:799px;font-size:19px;font-weight:bold;color:#17b6d0;line-height:22px;letter-spacing:1.9px;-webkit-text-stroke:0.9px #17b6d0">N<span style="color:#f39a12;-webkit-text-stroke:0.9px #f39a12">x</span>Vet</div>
</body></html>
